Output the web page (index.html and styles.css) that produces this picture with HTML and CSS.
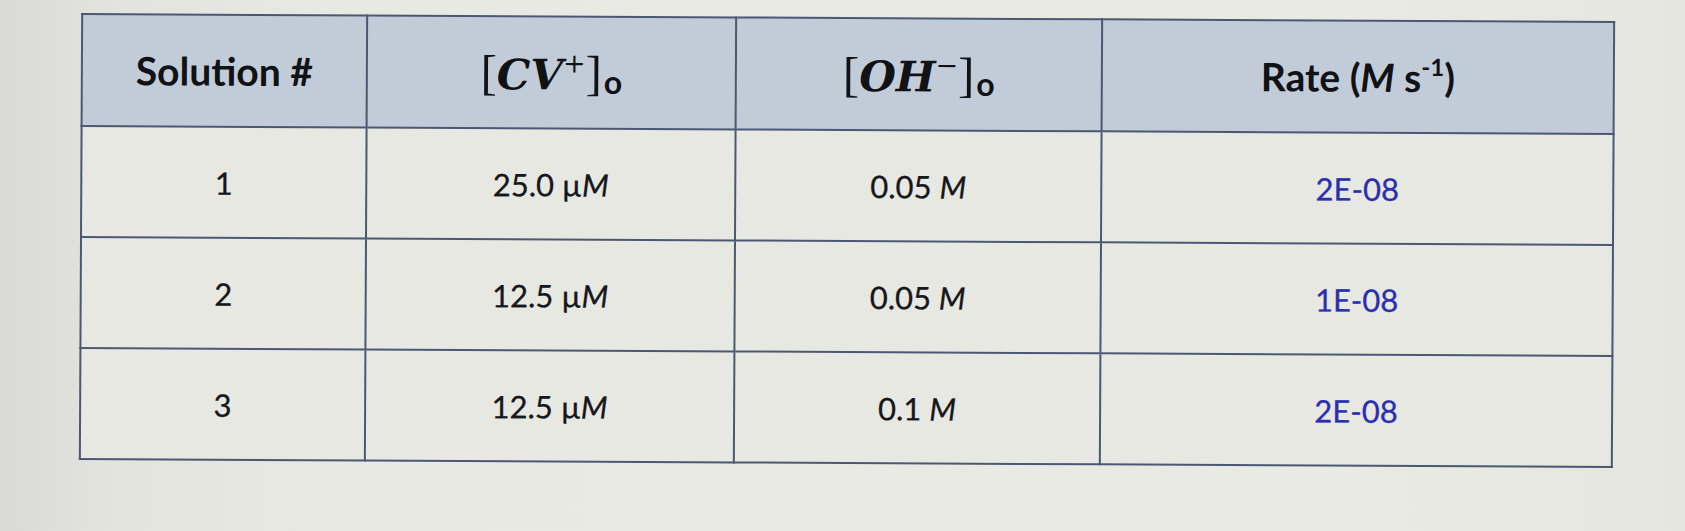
FILE: index.html
```html
<!DOCTYPE html>
<html>
<head>
<meta charset="utf-8">
<link rel="stylesheet" href="styles.css">
</head>
<body>
<div class="page">
  <table class="data">
    <colgroup>
      <col class="c1"><col class="c2"><col class="c3"><col class="c4">
    </colgroup>
    <thead>
      <tr>
        <th>Solution #</th>
        <th><span class="math"><span class="br">[</span><i>CV</i><sup class="msup">+</sup><span class="br">]</span></span><span class="sub0">o</span></th>
        <th><span class="math"><span class="br">[</span><i>OH</i><sup class="msup">−</sup><span class="br">]</span></span><span class="sub0">o</span></th>
        <th>Rate (<i>M</i> s<sup class="tsup">-1</sup>)</th>
      </tr>
    </thead>
    <tbody>
      <tr>
        <td>1</td>
        <td>25.0 µ<i>M</i></td>
        <td>0.05 <i>M</i></td>
        <td class="rate">2E-08</td>
      </tr>
      <tr>
        <td>2</td>
        <td>12.5 µ<i>M</i></td>
        <td>0.05 <i>M</i></td>
        <td class="rate">1E-08</td>
      </tr>
      <tr>
        <td>3</td>
        <td>12.5 µ<i>M</i></td>
        <td>0.1 <i>M</i></td>
        <td class="rate">2E-08</td>
      </tr>
    </tbody>
  </table>
</div>
</body>
</html>
```

FILE: styles.css
```css
html, body {
  margin: 0;
  padding: 0;
}
body {
  width: 1685px;
  height: 531px;
  overflow: hidden;
  background: linear-gradient(90deg, #d9d9d5 0%, #e3e3de 6%, #e9e9e4 20%, #eaeae5 80%, #e6e6e1 100%);
  font-family: Lato, "Open Sans", sans-serif;
}
.page {
  padding: 17px 0 0 80px;
}
.data {
  width: 1532px;
  table-layout: fixed;
  border-collapse: collapse;
  transform: rotate(0.3deg);
  transform-origin: center center;
}
.c1 { width: 285px; }
.c2 { width: 369px; }
.c3 { width: 366px; }
.c4 { width: 512px; }
.data th,
.data td {
  border: 2px solid #4b5874;
  text-align: center;
  vertical-align: middle;
  padding: 0;
}
.data thead tr { height: 112px; }
.data tbody tr { height: 111px; }
.data th {
  background: #c2ccd9;
  color: #101216;
  font-weight: 700;
  font-size: 39px;
}
.data td {
  background: #e8e8e3;
  color: #16171a;
  font-weight: 400;
  font-size: 31px;
  -webkit-text-stroke: 0.3px currentColor;
}
.data td.rate {
  color: #2a2fb0;
}
.data i {
  font-style: italic;
}
.math {
  font-family: "DejaVu Serif", "Liberation Serif", serif;
  font-size: 42px;
}
.math i {
  font-weight: 700;
}
.math .br {
  font-weight: 400;
  font-family: "Liberation Serif", serif;
  font-size: 49px;
}
.msup {
  font-size: 27px;
  font-weight: 400;
  vertical-align: 17px;
  line-height: 0;
}
.sub0 {
  font-family: Lato, sans-serif;
  font-weight: 700;
  font-size: 32px;
  vertical-align: -4px;
  margin-left: 2px;
}
.tsup {
  font-size: 24px;
  vertical-align: 16px;
  line-height: 0;
}
```
